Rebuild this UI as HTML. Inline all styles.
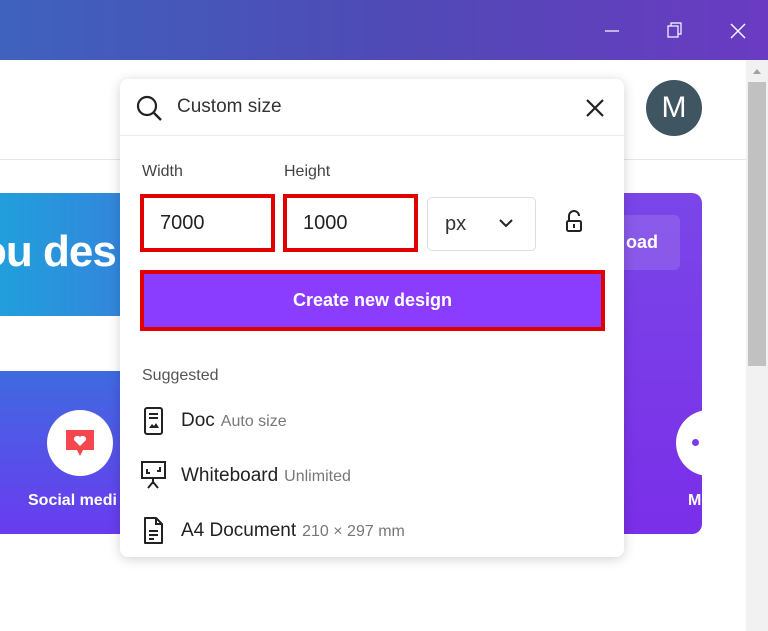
<!DOCTYPE html>
<html><head><style>
*{margin:0;padding:0;box-sizing:border-box}
body{width:768px;height:631px;overflow:hidden;background:#fff;font-family:"Liberation Sans",sans-serif;position:relative}
.a{position:absolute}
.title{left:0;top:0;width:768px;height:60px;background:linear-gradient(90deg,#3f62bd,#4f4ab5 50%,#6a3bc2)}
.sb{left:746px;top:60px;width:22px;height:571px;background:#f1f1f1}
.thumb{left:748px;top:82px;width:18px;height:284px;background:#c1c1c1}
.pop{left:120px;top:79px;width:504px;height:478px;background:#fff;border-radius:8px;box-shadow:0 2px 12px rgba(0,0,0,.18)}
.lbl{color:#444;font-size:16px}
.inp{border:4px solid #e00000;background:#fff;font-size:20px;color:#222;padding-left:16px;line-height:50px}
.it{font-size:19px;color:#222}
.it span{font-size:16px;color:#777;margin-left:6px}
</style></head><body>
<div class="a title"></div>
<svg class="a" style="left:600px;top:18px" width="150" height="26"><line x1="5" y1="13" x2="19" y2="13" stroke="#fff" stroke-width="1.2"/><rect x="68" y="8" width="10" height="11" fill="none" stroke="#fff" stroke-width="1.2"/><path d="M71 8V5h10v11h-3" fill="none" stroke="#fff" stroke-width="1.2"/><path d="M131 6l14 14M145 6l-14 14" stroke="#fff" stroke-width="1.4"/></svg>
<div class="a" style="left:0;top:159px;width:746px;height:1px;background:#e6e6e6"></div>
<div class="a" style="left:646px;top:80px;width:56px;height:56px;border-radius:50%;background:#3f5562;color:#fff;font-size:30px;text-align:center;line-height:56px">M</div>
<div class="a" style="left:0;top:193px;width:124px;height:123px;background:linear-gradient(90deg,#219fdc,#3386dc);overflow:hidden"><div style="position:absolute;left:-20px;top:34px;color:#fff;font-weight:bold;font-size:44px;letter-spacing:-1px">ou des</div></div>
<div class="a" style="left:0;top:371px;width:124px;height:163px;background:linear-gradient(180deg,#3f6ae0,#6a3bef)"></div>
<div class="a" style="left:47px;top:410px;width:66px;height:66px;border-radius:50%;background:#fff"></div>
<svg class="a" style="left:62px;top:426px" width="36" height="36"><path d="M4 4h28v20H21l-3 6-3-6H4z" fill="#f5454d" stroke-linejoin="round"/><path d="M18 20l-6-6a3.5 3.5 0 0 1 6-3 3.5 3.5 0 0 1 6 3z" fill="#fff"/></svg>
<div class="a" style="left:28px;top:492px;color:#fff;font-weight:bold;font-size:16px">Social medi</div>
<div class="a" style="left:560px;top:193px;width:142px;height:341px;background:linear-gradient(180deg,#7a46e8,#7a2fe8);border-radius:0 10px 10px 0"></div>
<div class="a" style="left:600px;top:215px;width:80px;height:55px;background:rgba(255,255,255,.12);border-radius:6px;color:#fff;font-weight:bold;font-size:18px;line-height:55px;text-align:right;padding-right:22px">oad</div>
<div class="a" style="left:676px;top:410px;width:66px;height:66px;border-radius:50%;background:#fff"></div>
<div class="a" style="left:692px;top:439px;width:7px;height:7px;border-radius:50%;background:#7a3be8"></div>
<div class="a" style="left:688px;top:492px;color:#fff;font-weight:bold;font-size:16px">M</div>
<div class="a" style="left:702px;top:160px;width:44px;height:471px;background:#fff"></div>
<div class="a sb"></div><div class="a thumb"></div>
<svg class="a" style="left:750px;top:66px" width="14" height="10"><path d="M3 8l4-5 4 5z" fill="#a0a0a0"/></svg>
<div class="a pop">
 <div class="a" style="left:0;top:56px;width:504px;height:1px;background:#ececec"></div>
 <svg class="a" style="left:14px;top:14px" width="32" height="32"><circle cx="13" cy="13" r="9" fill="none" stroke="#222" stroke-width="2.2"/><path d="M20 20l7 7" stroke="#222" stroke-width="2.4"/></svg>
 <div class="a" style="left:57px;top:17px;font-size:19px;color:#333">Custom size</div>
 <svg class="a" style="left:464px;top:18px" width="22" height="22"><path d="M3 3l16 16M19 3L3 19" stroke="#222" stroke-width="2.2"/></svg>
 <div class="a lbl" style="left:22px;top:84px">Width</div>
 <div class="a lbl" style="left:164px;top:84px">Height</div>
 <div class="a inp" style="left:20px;top:115px;width:135px;height:58px">7000</div>
 <div class="a inp" style="left:163px;top:115px;width:135px;height:58px">1000</div>
 <div class="a" style="left:307px;top:118px;width:109px;height:54px;border:1px solid #ddd;border-radius:5px;font-size:20px;color:#333;padding-left:17px;line-height:52px">px</div>
 <svg class="a" style="left:378px;top:138px" width="16" height="12"><path d="M2 3l6 6 6-6" fill="none" stroke="#222" stroke-width="2"/></svg>
 <svg class="a" style="left:444px;top:130px" width="20" height="26"><path d="M5 12V7a5 5 0 0 1 10 0" fill="none" stroke="#222" stroke-width="2"/><rect x="3" y="12" width="14" height="10" rx="1.5" fill="none" stroke="#222" stroke-width="2"/><path d="M10 15v4" stroke="#222" stroke-width="2"/></svg>
 <div class="a" style="left:20px;top:191px;width:465px;height:61px;border:4px solid #e00000;background:#8b3dff;color:#fff;font-weight:bold;font-size:18px;text-align:center;line-height:53px">Create new design</div>
 <div class="a lbl" style="left:22px;top:288px;color:#555">Suggested</div>
 <svg class="a" style="left:22px;top:327px" width="24" height="32"><rect x="3" y="2" width="17" height="26" rx="2" fill="none" stroke="#222" stroke-width="2"/><path d="M7 8h9M7 12h9" stroke="#222" stroke-width="2"/><path d="M7 22l3-4 2 2 2-3 3 5z" fill="#222"/></svg>
 <div class="a it" style="left:61px;top:331px">Doc<span>Auto size</span></div>
 <svg class="a" style="left:20px;top:381px" width="28" height="30"><rect x="2" y="2" width="23" height="16" fill="none" stroke="#222" stroke-width="2"/><path d="M13 18v6M13 22l-5 6M13 22l5 6M7 9v4h3M20 7v4h-3" fill="none" stroke="#222" stroke-width="2"/></svg>
 <div class="a it" style="left:61px;top:386px">Whiteboard<span>Unlimited</span></div>
 <svg class="a" style="left:22px;top:436px" width="24" height="32"><path d="M3 3h11l6 6v19H3z" fill="none" stroke="#222" stroke-width="2" stroke-linejoin="round"/><path d="M14 3v6h6M7 16h9M7 20h9M7 24h5" fill="none" stroke="#222" stroke-width="2"/></svg>
 <div class="a it" style="left:61px;top:441px">A4 Document<span>210 × 297 mm</span></div>
</div>
</body></html>
